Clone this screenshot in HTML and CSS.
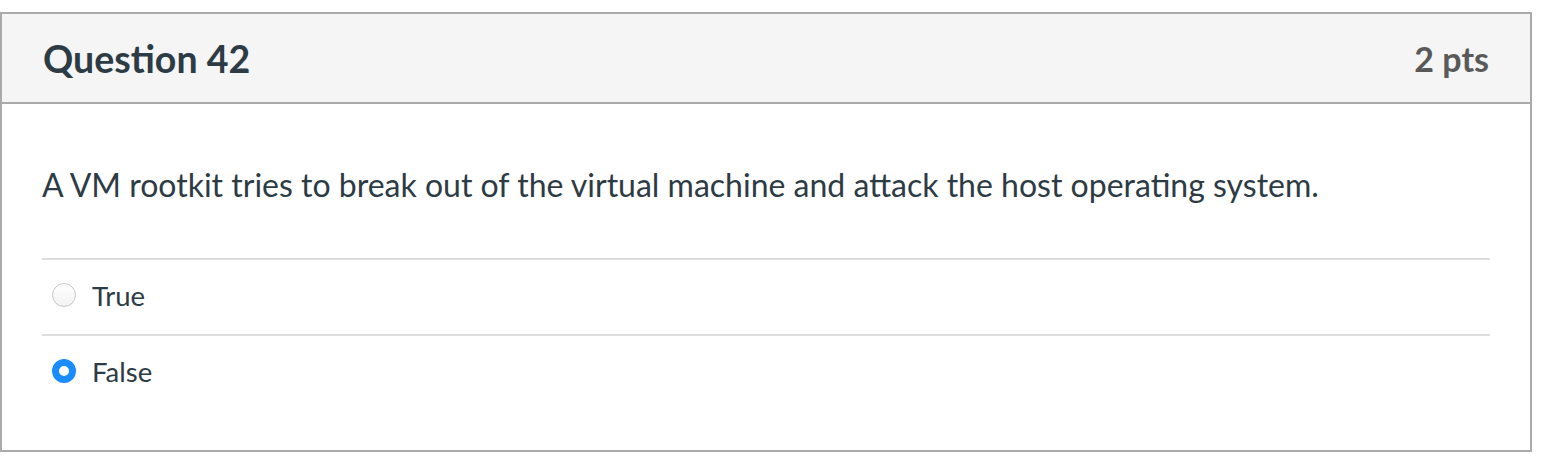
FILE: index.html
```html
<!DOCTYPE html>
<html>
<head>
<meta charset="utf-8">
<link rel="stylesheet" href="styles.css">
</head>
<body>
<div class="question">
  <div class="question-header">
    <h2 class="question-title">Question 42</h2>
    <span class="question-points">2 pts</span>
  </div>
  <div class="question-body">
    <p class="question-text">A VM rootkit tries to break out of the virtual machine and attack the host operating system.</p>
    <div class="answers">
      <label class="answer">
        <span class="radio"></span>
        <span class="answer-label">True</span>
      </label>
      <label class="answer">
        <span class="radio radio-checked"></span>
        <span class="answer-label">False</span>
      </label>
    </div>
  </div>
</div>
</body>
</html>
```
FILE: styles.css
```css
html, body {
  margin: 0;
  padding: 0;
  background: #ffffff;
}
body {
  padding-top: 12px;
  font-family: Lato, "Liberation Sans", sans-serif;
  color: #2d3b45;
}
.question {
  box-sizing: border-box;
  width: 1532px;
  height: 440px;
  border: 2px solid #aaaaaa;
  background: #ffffff;
}
.question-header {
  display: flex;
  align-items: center;
  justify-content: space-between;
  height: 88px;
  padding: 0 41px 0 41px;
  background: #f5f5f5;
  border-bottom: 2px solid #aaaaaa;
}
.question-title {
  margin: 0;
  font-size: 37.5px;
  font-weight: 700;
  color: #2d3b45;
}
.question-points {
  font-size: 34px;
  font-weight: 700;
  color: #595959;
}
.question-body {
  padding: 0 40px;
}
.question-text {
  box-sizing: border-box;
  margin: 0;
  padding-top: 59px;
  height: 154px;
  font-size: 32px;
  line-height: 44px;
  color: #2d3b45;
}
.answers {
  display: flex;
  flex-direction: column;
}
.answer {
  display: flex;
  align-items: center;
  gap: 16px;
  height: 70px;
  padding-left: 10px;
  padding-bottom: 4px;
  border-top: 2px solid #dddddd;
}
.radio {
  box-sizing: border-box;
  width: 24px;
  height: 24px;
  border-radius: 50%;
  border: 1px solid #c7c7c7;
  background: linear-gradient(#ffffff, #f2f2f2);
}
.radio-checked {
  border: 7px solid #1a8cff;
  background: #ffffff;
}
.answer-label {
  font-size: 27.5px;
  color: #2d3b45;
}
```
